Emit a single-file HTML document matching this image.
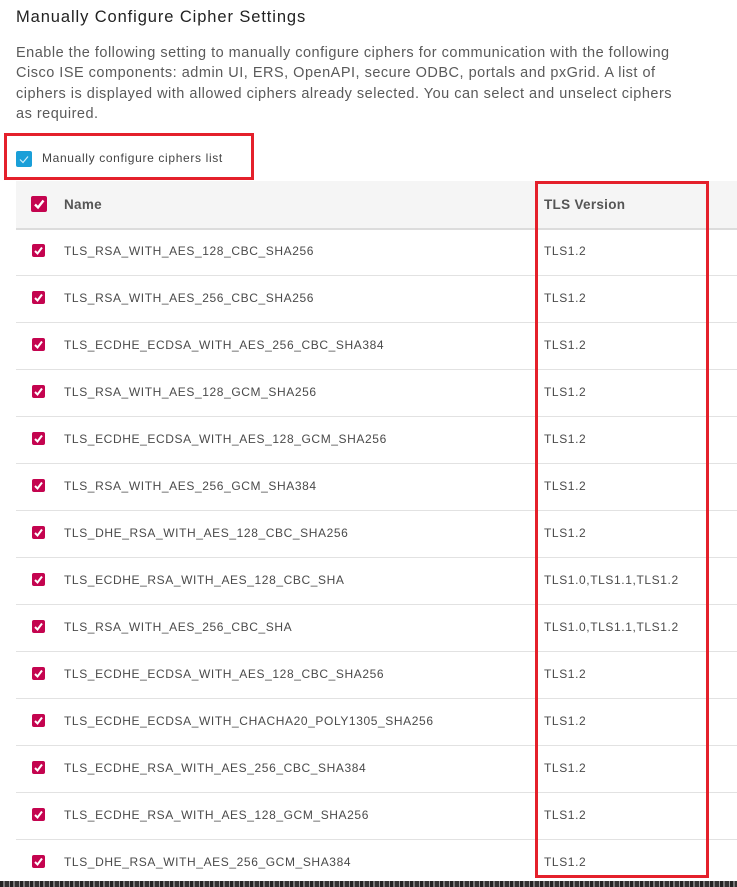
<!DOCTYPE html>
<html><head><style>
body{margin:0;width:737px;height:887px;background:#fff;font-family:"Liberation Sans",Arial,sans-serif;position:relative;overflow:hidden}
.a{position:absolute;white-space:nowrap}
.cb{position:absolute;width:13px;height:13px;background:#c4044f;border-radius:2px}
.cb svg{position:absolute;left:1px;top:1px}
.sep{position:absolute;left:16px;right:0;height:1px;background:#e2e2e2}
.t{position:absolute;font-size:12px;color:#4a4a4a;letter-spacing:0.6px}
</style></head><body>
<div class="a" style="left:16px;top:8px;font-size:16.5px;letter-spacing:0.9px;color:#222">Manually Configure Cipher Settings</div>
<div class="a" style="left:16px;top:43px;font-size:14.5px;letter-spacing:0.5px;line-height:20.3px;color:#5a5a5a;white-space:normal;width:675px">Enable the following setting to manually configure ciphers for communication with the following Cisco ISE components: admin UI, ERS, OpenAPI, secure ODBC, portals and pxGrid. A list of ciphers is displayed with allowed ciphers already selected. You can select and unselect ciphers as required.</div>
<div class="a" style="left:4px;top:133px;width:244px;height:41px;border:3px solid #e4202b"></div>
<div class="a" style="left:16px;top:151px;width:16px;height:16px;background:#1a9fd8;border-radius:2px"><svg width="16" height="16"><path d="M4 8.5l3 3 5-6" stroke="#cfeefb" stroke-width="1.2" fill="none"/></svg></div>
<div class="a" style="left:42px;top:151px;font-size:12px;letter-spacing:0.65px;color:#444">Manually configure ciphers list</div>
<div class="a" style="left:16px;top:181px;right:0;height:47px;background:#f5f5f5;border-bottom:2px solid #dcdcdc"></div>
<div class="cb" style="left:31px;top:196px;width:16px;height:16px"><svg width="14" height="14"><path d="M3 7.5l3 3 5.5-7" stroke="#fff" stroke-width="2.4" fill="none"/></svg></div>
<div class="a" style="left:64px;top:197px;font-size:13.5px;letter-spacing:0.3px;font-weight:bold;color:#555">Name</div>
<div class="a" style="left:544px;top:197px;font-size:13.5px;letter-spacing:0.3px;font-weight:bold;color:#555">TLS Version</div>
<div id="rows"></div>
<div class="a" style="left:535px;top:181px;width:168px;height:691px;border:3px solid #e4202b"></div>
<div class="a" style="left:0;top:881px;width:737px;height:6px;background:repeating-linear-gradient(90deg,#222 0 3px,#777 3px 5px,#333 5px 9px,#999 9px 10px)"></div>
<script>
var r=[["TLS_RSA_WITH_AES_128_CBC_SHA256","TLS1.2"],["TLS_RSA_WITH_AES_256_CBC_SHA256","TLS1.2"],["TLS_ECDHE_ECDSA_WITH_AES_256_CBC_SHA384","TLS1.2"],["TLS_RSA_WITH_AES_128_GCM_SHA256","TLS1.2"],["TLS_ECDHE_ECDSA_WITH_AES_128_GCM_SHA256","TLS1.2"],["TLS_RSA_WITH_AES_256_GCM_SHA384","TLS1.2"],["TLS_DHE_RSA_WITH_AES_128_CBC_SHA256","TLS1.2"],["TLS_ECDHE_RSA_WITH_AES_128_CBC_SHA","TLS1.0,TLS1.1,TLS1.2"],["TLS_RSA_WITH_AES_256_CBC_SHA","TLS1.0,TLS1.1,TLS1.2"],["TLS_ECDHE_ECDSA_WITH_AES_128_CBC_SHA256","TLS1.2"],["TLS_ECDHE_ECDSA_WITH_CHACHA20_POLY1305_SHA256","TLS1.2"],["TLS_ECDHE_RSA_WITH_AES_256_CBC_SHA384","TLS1.2"],["TLS_ECDHE_RSA_WITH_AES_128_GCM_SHA256","TLS1.2"],["TLS_DHE_RSA_WITH_AES_256_GCM_SHA384","TLS1.2"]];
var h="";
r.forEach(function(x,i){var c=251+47*i;
h+='<div class="cb" style="left:32px;top:'+(c-7)+'px"><svg width="11" height="11"><path d="M2 6l2.5 2.5 4.5-6" stroke="#fff" stroke-width="2" fill="none"/></svg></div>';
h+='<div class="t" style="left:64px;top:'+(c-7)+'px">'+x[0]+'</div><div class="t" style="left:544px;top:'+(c-7)+'px">'+x[1]+'</div>';
if(i<13)h+='<div class="sep" style="top:'+(c+24)+'px"></div>';});
document.getElementById("rows").innerHTML=h;
</script>
</body></html>
